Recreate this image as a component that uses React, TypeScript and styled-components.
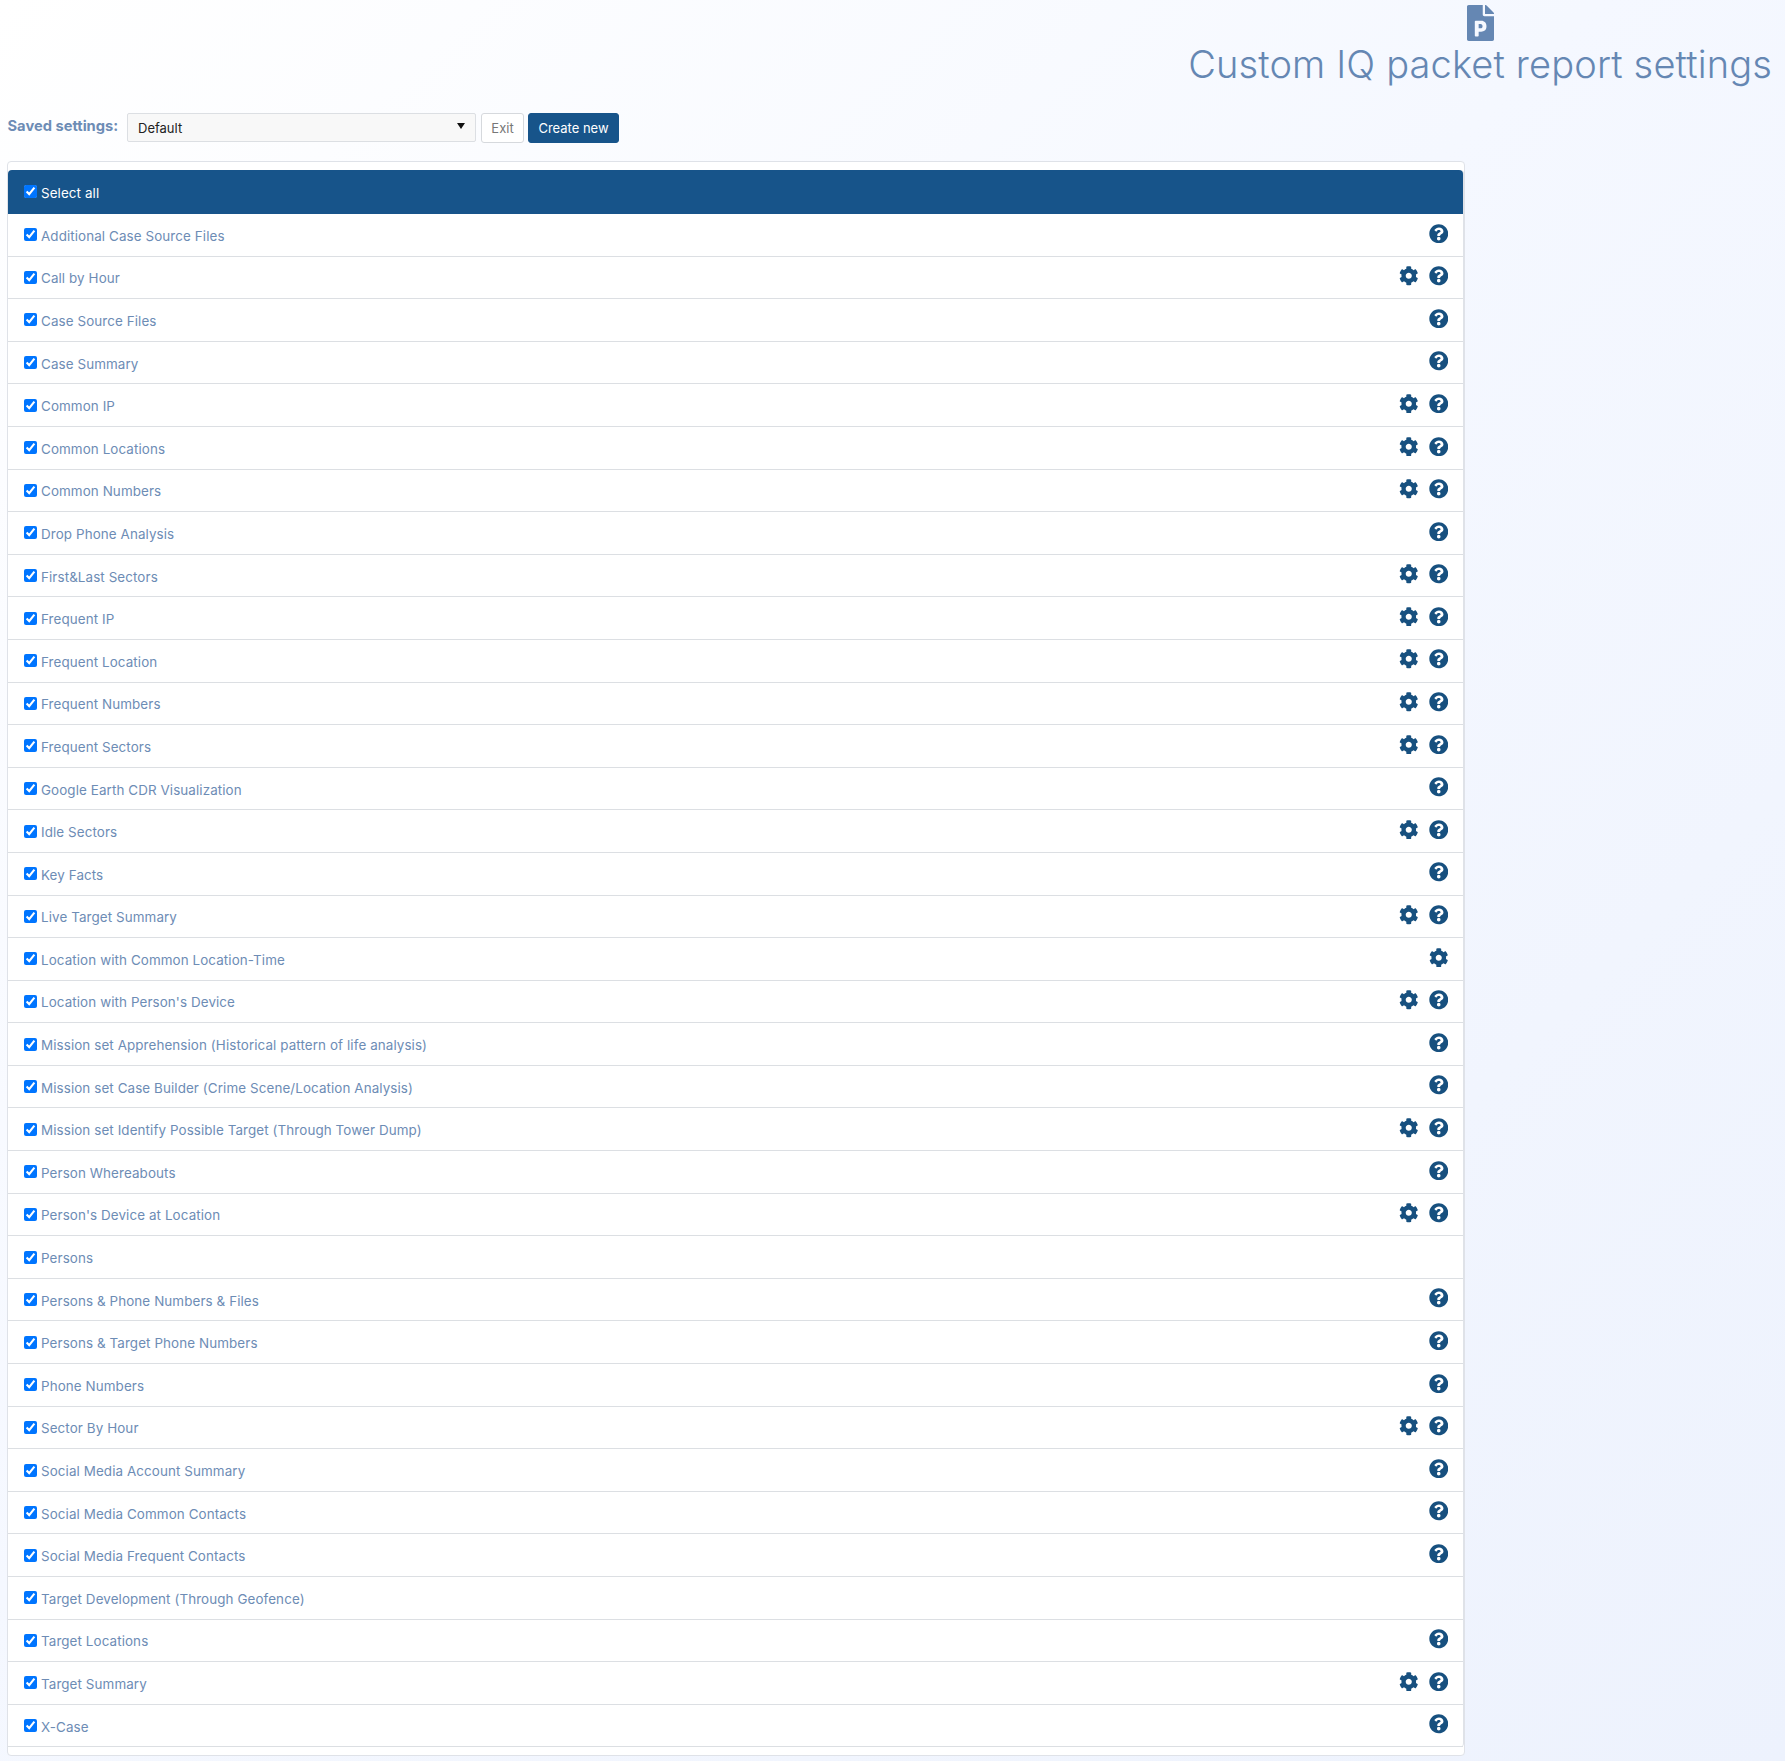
import React from "react";
import styled, { createGlobalStyle } from "styled-components";
import { FaCog, FaQuestionCircle, FaFilePowerpoint } from "react-icons/fa";

const Global = createGlobalStyle`
  html, body { margin: 0; padding: 0; }
  body {
    width: 1785px; height: 1761px; overflow: hidden;
    background: linear-gradient(135deg, #ffffff 0%, #f5f8ff 45%, #edf2fd 100%);
    font-family: Inter, "Open Sans", "Liberation Sans", sans-serif;
  }
`;
const Page = styled.div`display: flex; flex-direction: column; width: 1785px; height: 1761px;`;
const Header = styled.header`
  display: flex; flex-direction: column; align-items: center; align-self: flex-end;
  padding: 5px 13px 0 0; height: 113px; box-sizing: border-box;
`;
const TitleIcon = styled(FaFilePowerpoint)`width: 27px; height: 36px; color: #6587b3; display: block;`;
const Title = styled.h1`
  margin: 0; font-size: 38px; line-height: 46px; font-weight: 300; color: #6587b3;
  letter-spacing: 0.15px; white-space: nowrap;
`;
const Toolbar = styled.div`display: flex; align-items: center; height: 30px; padding-left: 7.5px;`;
const SavedLabel = styled.span`
  width: 119.5px; font-size: 14.7px; font-weight: 700; color: #6d8cb5; position: relative; top: -2px; white-space: nowrap;
`;
const SelectBox = styled.div`
  width: 349px; height: 29px; margin-bottom: 1px; box-sizing: border-box; background: #f8f8f8; border: 1px solid #dcdfe3; border-radius: 2px;
  display: flex; align-items: center; justify-content: space-between; padding: 0 10px;
  font-size: 13px; color: #222;
`;
const Arrow = styled.span`
  width: 0; height: 0; border-left: 4px solid transparent; border-right: 4px solid transparent;
  border-top: 6px solid #111; margin-bottom: 3px;
`;
const Button = styled.button<{ $primary?: boolean }>`
  height: 30px; box-sizing: border-box; border-radius: 3px; font: inherit; font-size: 13px; padding: 0;
  border: 1px solid ${p => (p.$primary ? "#17548a" : "#d6d9dd")};
  background: ${p => (p.$primary ? "#17548a" : "#fff")};
  color: ${p => (p.$primary ? "#fff" : "#777")};
  width: ${p => (p.$primary ? "91px" : "43px")};
  margin-left: ${p => (p.$primary ? "4px" : "5px")};
`;
const Card = styled.section`
  margin: 18px 0 0 7px; width: 1458px; height: 1595px; box-sizing: border-box;
  background: #fff; border: 1px solid #dfe2e8; border-radius: 4px; padding-top: 8px;
`;
const List = styled.div`border-right: 1px solid #dfe2e8; border-radius: 4px;`;
const Row = styled.div<{ $head?: boolean }>`
  display: flex; align-items: center; box-sizing: border-box; padding: 0 15px 0 16px;
  height: ${p => (p.$head ? "44px" : "42.6px")};
  background: ${p => (p.$head ? "#17548a" : "transparent")};
  border-bottom: ${p => (p.$head ? "none" : "1px solid #dcdfe3")};
  border-radius: ${p => (p.$head ? "4px 4px 0 0" : "0")};
`;
const Check = styled.input<{ $head?: boolean }>`
  width: 13px; height: 13px; margin: 0 4px 0 0; accent-color: #0075ff; flex: none; position: relative;
  top: ${p => (p.$head ? "-1px" : "0")};
`;
const Label = styled.span<{ $head?: boolean }>`
  flex: 1; font-size: 13.4px; letter-spacing: 0.1px; color: ${p => (p.$head ? "#fff" : "#6d8cb5")}; position: relative; top: 1px;
`;
const Icons = styled.div`display: flex; align-items: center; gap: 10px; color: #17507f; position: relative; top: -1.5px;`;
const Gear = styled(FaCog)`width: 19.5px; height: 19.5px; display: block;`;
const Help = styled(FaQuestionCircle)`width: 19.5px; height: 19.5px; display: block;`;

const rows: [string, boolean, boolean][] = [
  ["Additional Case Source Files", false, true],
  ["Call by Hour", true, true],
  ["Case Source Files", false, true],
  ["Case Summary", false, true],
  ["Common IP", true, true],
  ["Common Locations", true, true],
  ["Common Numbers", true, true],
  ["Drop Phone Analysis", false, true],
  ["First&Last Sectors", true, true],
  ["Frequent IP", true, true],
  ["Frequent Location", true, true],
  ["Frequent Numbers", true, true],
  ["Frequent Sectors", true, true],
  ["Google Earth CDR Visualization", false, true],
  ["Idle Sectors", true, true],
  ["Key Facts", false, true],
  ["Live Target Summary", true, true],
  ["Location with Common Location-Time", true, false],
  ["Location with Person's Device", true, true],
  ["Mission set Apprehension (Historical pattern of life analysis)", false, true],
  ["Mission set Case Builder (Crime Scene/Location Analysis)", false, true],
  ["Mission set Identify Possible Target (Through Tower Dump)", true, true],
  ["Person Whereabouts", false, true],
  ["Person's Device at Location", true, true],
  ["Persons", false, false],
  ["Persons & Phone Numbers & Files", false, true],
  ["Persons & Target Phone Numbers", false, true],
  ["Phone Numbers", false, true],
  ["Sector By Hour", true, true],
  ["Social Media Account Summary", false, true],
  ["Social Media Common Contacts", false, true],
  ["Social Media Frequent Contacts", false, true],
  ["Target Development (Through Geofence)", false, false],
  ["Target Locations", false, true],
  ["Target Summary", true, true],
  ["X-Case", false, true],
];

export default function App() {
  return (
    <Page>
      <Global />
      <Header>
        <TitleIcon />
        <Title>Custom IQ packet report settings</Title>
      </Header>
      <Toolbar>
        <SavedLabel>Saved settings:</SavedLabel>
        <SelectBox>Default<Arrow /></SelectBox>
        <Button>Exit</Button>
        <Button $primary>Create new</Button>
      </Toolbar>
      <Card>
        <List>
          <Row $head>
            <Check $head type="checkbox" defaultChecked />
            <Label $head>Select all</Label>
          </Row>
          {rows.map(([name, gear, help]) => (
            <Row key={name}>
              <Check type="checkbox" defaultChecked />
              <Label>{name}</Label>
              <Icons>
                {gear && <Gear />}
                {help && <Help />}
              </Icons>
            </Row>
          ))}
        </List>
      </Card>
    </Page>
  );
}
